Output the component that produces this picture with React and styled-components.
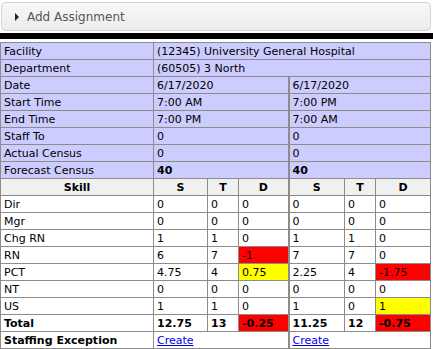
import React from 'react';
import styled, { createGlobalStyle } from 'styled-components';

const GlobalStyle = createGlobalStyle`
  html, body {
    margin: 0;
    padding: 0;
    background: #fff;
  }
  body {
    font-family: "DejaVu Sans", Verdana, sans-serif;
  }
`;

const Page = styled.div`
  width: 433px;
  padding-top: 2px;
`;

const AccordionHeader = styled.div`
  margin: 0 2px 0 1px;
  height: 27px;
  display: flex;
  align-items: center;
  gap: 6px;
  padding-left: 13px;
  border: 1px solid #d3d3d3;
  border-radius: 4px;
  background: linear-gradient(#f8f8f8, #ececec);
  color: #555;
  font-size: 12px;
`;

const Arrow = styled.span`
  width: 0;
  height: 0;
  border-top: 4px solid transparent;
  border-bottom: 4px solid transparent;
  border-left: 4px solid #222;
  margin-right: 2px;
`;

const Rule = styled.div`
  height: 6px;
  margin-top: 2px;
  background: #000;
`;

const Table = styled.table`
  margin-top: 3px;
  width: 430px;
  border-collapse: collapse;
  table-layout: fixed;
  font-size: 11px;
  color: #000;
`;

const rowBg = {
  info: '#ccccff',
  head: '#f0f0f0',
  data: '#ffffff',
};

const Row = styled.tr`
  background: ${(p) => rowBg[p.$kind || 'data']};
  font-weight: ${(p) => (p.$bold ? 'bold' : 'normal')};
`;

const Cell = styled.td`
  height: 16px;
  padding: 0 3px;
  border: 1px solid #8c8c8c;
  border-left-width: ${(p) => (p.$split ? '2px' : '1px')};
  text-align: ${(p) => (p.$center ? 'center' : 'left')};
  font-weight: ${(p) => (p.$bold ? 'bold' : 'inherit')};
  background: ${(p) => p.$flag || 'transparent'};
  white-space: nowrap;
  overflow: hidden;
  line-height: 15px;
`;

const Link = styled.a`
  color: #0000ee;
  text-decoration: underline;
  font-weight: normal;
  cursor: pointer;
`;

const RED = '#ff0000';
const YELLOW = '#ffff00';

const info = [
  ['Date', '6/17/2020', '6/17/2020'],
  ['Start Time', '7:00 AM', '7:00 PM'],
  ['End Time', '7:00 PM', '7:00 AM'],
  ['Staff To', '0', '0'],
  ['Actual Census', '0', '0'],
];

const skills = [
  ['Dir', ['0', '0', '0'], ['0', '0', '0']],
  ['Mgr', ['0', '0', '0'], ['0', '0', '0']],
  ['Chg RN', ['1', '1', '0'], ['1', '1', '0']],
  ['RN', ['6', '7', '-1', RED], ['7', '7', '0']],
  ['PCT', ['4.75', '4', '0.75', YELLOW], ['2.25', '4', '-1.75', RED]],
  ['NT', ['0', '0', '0'], ['0', '0', '0']],
  ['US', ['1', '1', '0'], ['1', '0', '1', YELLOW]],
];

const Shift = ({ vals, split }) => (
  <>
    <Cell $split={split}>{vals[0]}</Cell>
    <Cell>{vals[1]}</Cell>
    <Cell $flag={vals[3]}>{vals[2]}</Cell>
  </>
);

export default function App() {
  return (
    <Page>
      <GlobalStyle />
      <AccordionHeader>
        <Arrow />
        Add Assignment
      </AccordionHeader>
      <Rule />
      <Table>
        <colgroup>
          <col style={{ width: 153 }} />
          <col style={{ width: 54 }} />
          <col style={{ width: 31 }} />
          <col style={{ width: 50 }} />
          <col style={{ width: 56 }} />
          <col style={{ width: 31 }} />
          <col style={{ width: 55 }} />
        </colgroup>
        <tbody>
          <Row $kind="info">
            <Cell>Facility</Cell>
            <Cell colSpan={6}>(12345) University General Hospital</Cell>
          </Row>
          <Row $kind="info">
            <Cell>Department</Cell>
            <Cell colSpan={6}>(60505) 3 North</Cell>
          </Row>
          {info.map(([label, a, b]) => (
            <Row $kind="info" key={label}>
              <Cell>{label}</Cell>
              <Cell colSpan={3}>{a}</Cell>
              <Cell colSpan={3} $split>{b}</Cell>
            </Row>
          ))}
          <Row $kind="info">
            <Cell>Forecast Census</Cell>
            <Cell colSpan={3} $bold>40</Cell>
            <Cell colSpan={3} $split $bold>40</Cell>
          </Row>
          <Row $kind="head" $bold>
            <Cell $center>Skill</Cell>
            <Cell $center>S</Cell>
            <Cell $center>T</Cell>
            <Cell $center>D</Cell>
            <Cell $center $split>S</Cell>
            <Cell $center>T</Cell>
            <Cell $center>D</Cell>
          </Row>
          {skills.map(([label, a, b]) => (
            <Row key={label}>
              <Cell>{label}</Cell>
              <Shift vals={a} />
              <Shift vals={b} split />
            </Row>
          ))}
          <Row $bold>
            <Cell>Total</Cell>
            <Shift vals={['12.75', '13', '-0.25', RED]} />
            <Shift vals={['11.25', '12', '-0.75', RED]} split />
          </Row>
          <Row $bold>
            <Cell>Staffing Exception</Cell>
            <Cell colSpan={3}><Link>Create</Link></Cell>
            <Cell colSpan={3} $split><Link>Create</Link></Cell>
          </Row>
        </tbody>
      </Table>
    </Page>
  );
}
